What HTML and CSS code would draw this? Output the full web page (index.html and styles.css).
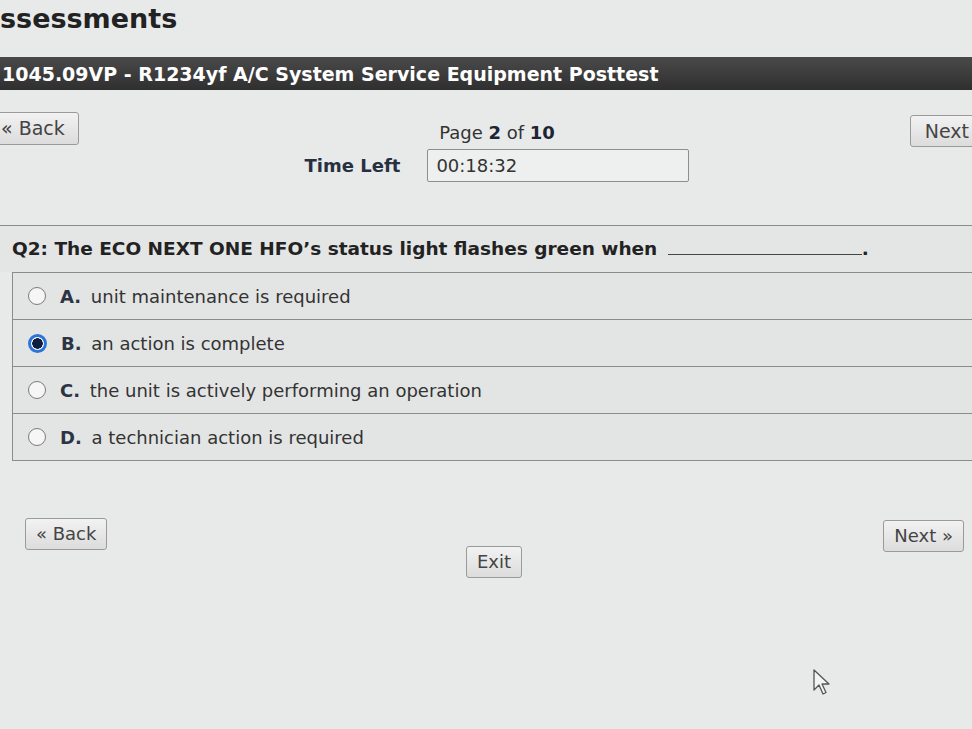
FILE: index.html
```html
<!DOCTYPE html>
<html lang="en">
    <head>
        <title>Assessments</title>
        <meta charset="utf-8">
        <link rel="stylesheet" href="styles.css">
    </head>
    <body>
        <h1 class="heading">ssessments</h1>
        <div class="titlebar">1045.09VP - R1234yf A/C System Service Equipment Posttest</div>

        <div class="topnav">
            <div class="left"><div class="button back">&laquo; Back</div></div>
            <div class="status">
                <div class="page">Page <b>2</b> of <b>10</b></div>
                <div class="timer">
                    <span class="timer-label">Time Left</span>
                    <span class="timer-box">00:18:32</span>
                </div>
            </div>
            <div class="right"><div class="button next">Next</div></div>
        </div>

        <div class="question">
            <div class="question-text">Q2: The ECO NEXT ONE HFO&rsquo;s status light flashes green when <span class="blank"></span>.</div>
            <div class="options">
                <div class="option"><span class="radio"></span><b>A.</b> unit maintenance is required</div>
                <div class="option"><span class="radio checked"></span><b>B.</b> an action is complete</div>
                <div class="option"><span class="radio"></span><b>C.</b> the unit is actively performing an operation</div>
                <div class="option"><span class="radio"></span><b>D.</b> a technician action is required</div>
            </div>
        </div>

        <div class="bottomnav">
            <div class="row">
                <div class="button">&laquo; Back</div>
                <div class="button">Next &raquo;</div>
            </div>
            <div class="button exit">Exit</div>
        </div>

        <svg class="cursor" width="22" height="28" viewBox="0 0 22 28">
            <path d="M2 2 L2 22 L7 17 L11 26 L14 24.5 L10 16 L17 16 Z" fill="#f4f4f4" stroke="#555" stroke-width="1.3" stroke-linejoin="round"/>
        </svg>
    </body>
</html>
```

FILE: styles.css
```css
html {
    overflow: hidden;
}
body {
    margin: 0;
    background: #e8eae9;
    color: #2b2b2b;
    font-family: "DejaVu Sans", Verdana, sans-serif;
    position: relative;
    height: 729px;
}
.heading {
    margin: 0;
    height: 57px;
    padding-top: 2px;
    box-sizing: border-box;
    font-size: 27px;
    line-height: 34px;
    color: #222;
}
.titlebar {
    height: 33px;
    line-height: 34px;
    padding-left: 2px;
    background: linear-gradient(#4a4a4a, #2f2f2f);
    color: #fff;
    font-size: 19px;
    font-weight: bold;
    white-space: nowrap;
}
.button {
    display: inline-block;
    padding: 0 10px;
    height: 30px;
    line-height: 30px;
    font-size: 18px;
    color: #444;
    background: linear-gradient(#f2f2f2, #dcdcdc);
    border: 1px solid #9a9a9a;
    border-radius: 3px;
    white-space: nowrap;
}
.topnav {
    display: grid;
    grid-template-columns: 1fr auto 1fr;
    align-items: start;
    padding-top: 22px;
}
.topnav .right {
    text-align: right;
}
.topnav .back {
    margin-left: -10px;
    padding: 0 13px 0 10px;
    height: 31px;
    font-size: 19px;
}
.topnav .next {
    margin-right: -14px;
    margin-top: 3px;
    padding: 0 16px 0 14px;
    font-size: 19px;
}
.status {
    display: flex;
    flex-direction: column;
    align-items: center;
    padding-top: 10px;
    margin-left: 22px;
}
.page {
    font-size: 18px;
    color: #333;
    line-height: 22px;
}
.page b {
    color: #1d2433;
}
.timer {
    display: flex;
    align-items: center;
    gap: 27px;
    margin-top: 5px;
}
.timer-label {
    font-size: 18px;
    font-weight: bold;
    color: #263040;
}
.timer-box {
    width: 252px;
    height: 31px;
    line-height: 31px;
    padding-left: 8px;
    font-size: 18px;
    color: #333;
    background: #eef0ef;
    border: 1px solid #8e8e8e;
    border-radius: 2px;
}
.question {
    margin-top: 43px;
    border-top: 1px solid #8c8c8c;
}
.question-text {
    height: 46px;
    line-height: 46px;
    padding-left: 12px;
    font-size: 18.5px;
    font-weight: bold;
    color: #222;
    background: #e4e6e5;
    white-space: nowrap;
}
.blank {
    display: inline-block;
    width: 194px;
    border-bottom: 1px solid #444;
    margin-left: 4px;
}
.options {
    margin-left: 12px;
    border: 1px solid #8c8c8c;
    border-right: none;
}
.option {
    display: flex;
    align-items: center;
    height: 46px;
    padding-left: 15px;
    font-size: 18px;
    color: #333;
    background: #e3e5e4;
    border-bottom: 1px solid #8c8c8c;
    white-space: pre;
}
.option:last-child {
    border-bottom: none;
}
.option b {
    margin-left: 14px;
    margin-right: 4px;
    color: #2c3444;
}
.radio {
    width: 16px;
    height: 16px;
    border: 1.5px solid #7b7b7b;
    border-radius: 50%;
    background: #f6f6f6;
}
.radio.checked {
    border: 3px solid #2c74d8;
    width: 13px;
    height: 13px;
    background: radial-gradient(circle, #0f1e3a 0 5px, #ffffff 5.5px);
}
.bottomnav {
    margin-top: 57px;
}
.bottomnav .row {
    display: flex;
    justify-content: space-between;
    padding: 0 8px 0 25px;
}
.bottomnav .row .button:last-child {
    margin-top: 2px;
}
.bottomnav .exit {
    display: block;
    width: max-content;
    margin: -6px auto 0 auto;
    position: relative;
    left: 8px;
}
.cursor {
    position: absolute;
    left: 812px;
    top: 668px;
}
```
